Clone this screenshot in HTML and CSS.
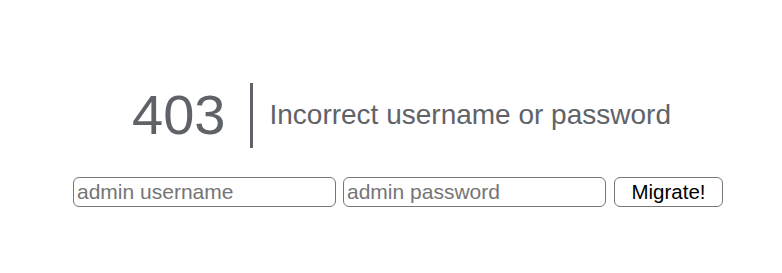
FILE: index.html
```html
<!DOCTYPE html>
<html>
<head>
<meta charset="utf-8">
<link rel="stylesheet" href="styles.css">
</head>
<body>
<div class="page">
  <div class="error">
    <h1 class="code">403</h1>
    <div class="divider"></div>
    <p class="message">Incorrect username or password</p>
  </div>
  <form class="login">
    <input class="field" type="text" placeholder="admin username">
    <input class="field" type="password" placeholder="admin password">
    <button class="submit" type="button">Migrate!</button>
  </form>
</div>
</body>
</html>
```
FILE: styles.css
```css
html, body {
  margin: 0;
  padding: 0;
  background: #ffffff;
}
body {
  font-family: "Liberation Sans", Arial, sans-serif;
}
.page {
  display: flex;
  flex-direction: column;
  align-items: stretch;
  padding-top: 82px;
}
.error {
  display: flex;
  align-items: center;
  justify-content: center;
  padding-left: 21px;
  color: #5f6368;
}
.code {
  margin: 0;
  font-size: 56px;
  font-weight: 400;
  line-height: 66px;
}
.divider {
  width: 3px;
  height: 65px;
  background: #5f6368;
  margin: 0 16px 0 25px;
}
.message {
  margin: 0;
  font-size: 28px;
  line-height: 32px;
}
.login {
  display: flex;
  justify-content: center;
  gap: 7px;
  margin: 29px 0 0;
  padding-left: 14px;
}
.field {
  box-sizing: border-box;
  width: 263px;
  height: 30px;
  padding: 1px 3px;
  border: 1px solid #767676;
  border-radius: 6px;
  font-family: "Liberation Sans", Arial, sans-serif;
  font-size: 21px;
  color: #000;
  background: #fff;
  outline: none;
}
.field::placeholder {
  color: #757575;
}
.submit {
  box-sizing: border-box;
  width: 109px;
  height: 30px;
  margin-left: 1px;
  padding: 1px 6px;
  border: 1px solid #767676;
  border-radius: 6px;
  background: #fff;
  color: #000;
  font-family: "Liberation Sans", Arial, sans-serif;
  font-size: 20.5px;
}
```
